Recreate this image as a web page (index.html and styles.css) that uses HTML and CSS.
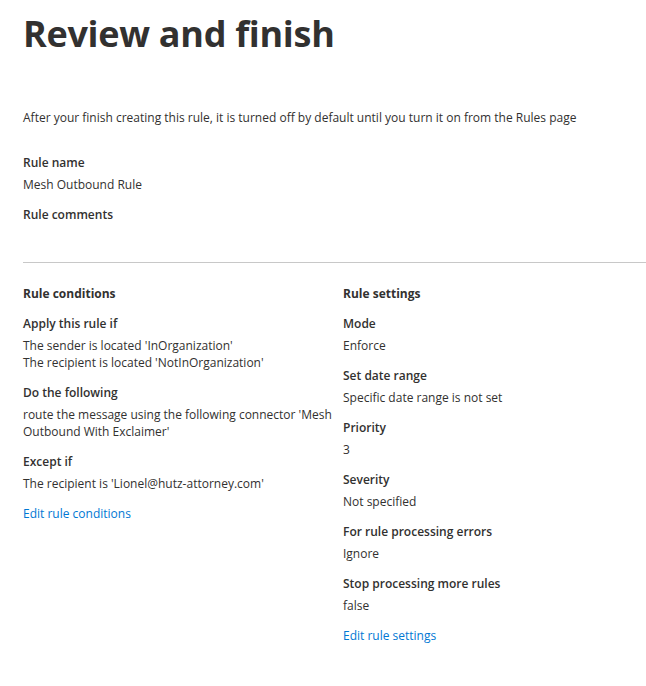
FILE: index.html
```html
<!DOCTYPE html>
<html lang="en">
<head>
<meta charset="utf-8">
<title>Review and finish</title>
<link rel="stylesheet" href="styles.css">
</head>
<body>
<div class="page">
  <h1 class="title">Review and finish</h1>
  <p class="intro">After your finish creating this rule, it is turned off by default until you turn it on from the Rules page</p>

  <div class="field">
    <div class="label">Rule name</div>
    <div class="value">Mesh Outbound Rule</div>
  </div>
  <div class="field">
    <div class="label">Rule comments</div>
    <div class="value empty"></div>
  </div>

  <hr class="divider">

  <div class="columns">
    <div class="col">
      <div class="section-title">Rule conditions</div>
      <div class="field">
        <div class="label">Apply this rule if</div>
        <div class="value">The sender is located 'InOrganization'<br>The recipient is located 'NotInOrganization'</div>
      </div>
      <div class="field">
        <div class="label">Do the following</div>
        <div class="value">route the message using the following connector 'Mesh Outbound With Exclaimer'</div>
      </div>
      <div class="field">
        <div class="label">Except if</div>
        <div class="value">The recipient is 'Lionel@hutz-attorney.com'</div>
      </div>
      <a class="link" href="#">Edit rule conditions</a>
    </div>
    <div class="col">
      <div class="section-title">Rule settings</div>
      <div class="field">
        <div class="label">Mode</div>
        <div class="value">Enforce</div>
      </div>
      <div class="field">
        <div class="label">Set date range</div>
        <div class="value">Specific date range is not set</div>
      </div>
      <div class="field">
        <div class="label">Priority</div>
        <div class="value">3</div>
      </div>
      <div class="field">
        <div class="label">Severity</div>
        <div class="value">Not specified</div>
      </div>
      <div class="field">
        <div class="label">For rule processing errors</div>
        <div class="value">Ignore</div>
      </div>
      <div class="field">
        <div class="label">Stop processing more rules</div>
        <div class="value">false</div>
      </div>
      <a class="link" href="#">Edit rule settings</a>
    </div>
  </div>
</div>
</body>
</html>
```
FILE: styles.css
```css
html, body {
  margin: 0;
  padding: 0;
  background: #ffffff;
}
body {
  font-family: "Segoe UI", "Open Sans", "Noto Sans", sans-serif;
  font-size: 12px;
  line-height: 17px;
  color: #323130;
}
.page {
  padding: 0 0 0 23px;
}
.title {
  margin: 0;
  padding-top: 9px;
  font-size: 36px;
  line-height: 50px;
  font-weight: 700;
  letter-spacing: -0.3px;
  color: #323130;
}
.intro {
  margin: 50px 0 0 0;
}
.field {
  display: flex;
  flex-direction: column;
  gap: 5px;
  margin-top: 13px;
}
.intro + .field {
  margin-top: 28px;
}
.label {
  font-weight: 600;
}
.value.empty {
  height: 17px;
}
.divider {
  margin: 17px 0 0 0;
  border: 0;
  border-top: 1px solid #c8c8c8;
  height: 0;
}
.columns {
  display: grid;
  grid-template-columns: 320px 1fr;
  margin-top: 22px;
}
.col {
  display: flex;
  flex-direction: column;
  align-items: flex-start;
  padding-right: 4px;
}
.section-title {
  font-weight: 700;
}
.link {
  margin-top: 13px;
  color: #0078d4;
  text-decoration: none;
}
```
